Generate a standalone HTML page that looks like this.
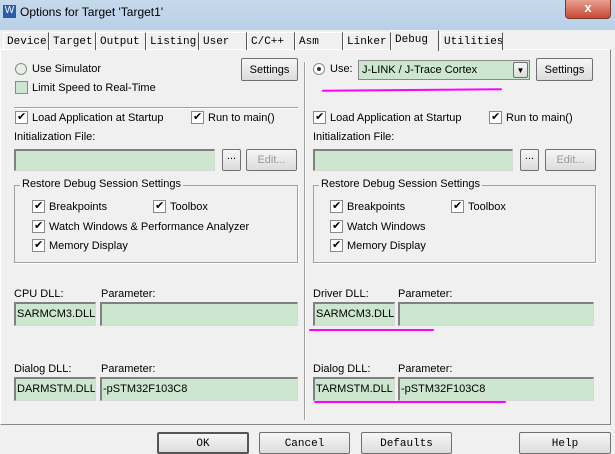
<!DOCTYPE html><html><head><style>
*{box-sizing:border-box}
body{margin:0;width:615px;height:448px;overflow:hidden;background:#f0f0f0;font:11px "Liberation Sans",sans-serif;color:#000;position:relative}
.a{position:absolute;white-space:nowrap}
.tb{left:0;top:0;width:615px;height:30px;background:linear-gradient(#c6d9ec,#b8d0e8);}
.tab{position:absolute;top:32px;height:18px;font:11px "Liberation Mono",monospace;padding:3px 3px;border-left:1px solid #fff;border-right:1px solid #555;border-top:1px solid #fff;white-space:nowrap;overflow:hidden}
.panel{left:0;top:49px;width:611px;height:376px;border:1px solid #888;border-top:1px solid #fff;border-left:1px solid #fff}
.btn{position:absolute;border:1px solid #707070;border-radius:2px;text-align:center;background:linear-gradient(#f6f6f6,#dcdcdc)}
.in{position:absolute;background:#cde6d0;border:1px solid #d8d8d8;border-top:2px solid #808080;border-left:2px solid #808080;padding:4px 1px;overflow:hidden;white-space:nowrap}
.cb{position:absolute;width:13px;height:13px;border:1px solid #8a8a8a;background:#fff}
.cb:after{content:"✔";position:absolute;left:1px;top:-2px;font-size:11px}
.cb.n:after{content:""}
.rd{position:absolute;width:12px;height:12px;border:1px solid #8a8a8a;border-radius:50%;background:#fff}
.hl{position:absolute;height:2px;border-top:1px solid #a0a0a0;border-bottom:1px solid #fff}
.grp{position:absolute;border:1px solid #a0a0a0;box-shadow:1px 1px 0 #fff}
.mag{position:absolute;height:2px;background:#f0f;border-radius:1px}
</style></head><body>
<div class="a tb"></div>
<div class="a" style="left:3px;top:5px;width:13px;height:13px;background:#2a5caa;color:#fff;font-size:10px;text-align:center">W</div>
<div class="a" style="left:20px;top:5px;font-size:12px">Options for Target 'Target1'</div>
<div class="a" style="left:565px;top:0;width:46px;height:19px;background:linear-gradient(#e8a090,#c74a35);border:1px solid #7a3a30;border-top:none;border-radius:0 0 4px 4px;color:#fff;text-align:center;font-weight:bold;font-size:13px">x</div>
<div class="a panel"></div>
<div class="tab" style="left:3px;width:46px">Device</div>
<div class="tab" style="left:49px;width:47px">Target</div>
<div class="tab" style="left:96px;width:50px">Output</div>
<div class="tab" style="left:146px;width:53px">Listing</div>
<div class="tab" style="left:199px;width:48px">User</div>
<div class="tab" style="left:247px;width:48px">C/C++</div>
<div class="tab" style="left:295px;width:48px">Asm</div>
<div class="tab" style="left:343px;width:48px">Linker</div>
<div class="tab" style="left:391px;width:48px;top:30px;height:21px;background:#f0f0f0;padding-top:3px">Debug</div>
<div class="tab" style="left:440px;width:63px">Utilities</div>

<div class="a" style="left:304px;top:62px;width:2px;height:358px;border-left:1px solid #a0a0a0;border-right:1px solid #fff"></div>

<!-- left -->
<div class="rd" style="left:15px;top:63px;background:#e6f0e6"></div><div class="a" style="left:32px;top:63px">Use Simulator</div>
<div class="btn" style="left:241px;top:58px;width:57px;height:23px;padding-top:5px">Settings</div>
<div class="cb n" style="left:15px;top:81px;background:#cde6d0"></div><div class="a" style="left:32px;top:82px">Limit Speed to Real-Time</div>
<div class="hl" style="left:14px;top:107px;width:284px"></div>
<div class="cb" style="left:15px;top:111px"></div><div class="a" style="left:32px;top:112px">Load Application at Startup</div>
<div class="cb" style="left:191px;top:111px"></div><div class="a" style="left:208px;top:112px">Run to main()</div>
<div class="a" style="left:14px;top:131px">Initialization File:</div>
<div class="in" style="left:14px;top:149px;width:201px;height:22px"></div>
<div class="btn" style="left:222px;top:149px;width:19px;height:22px">...</div>
<div class="btn" style="left:246px;top:149px;width:51px;height:22px;color:#999;padding-top:4px">Edit...</div>
<div class="grp" style="left:14px;top:185px;width:284px;height:78px"></div>
<div class="a" style="left:20px;top:178px;background:#f0f0f0;padding:0 2px">Restore Debug Session Settings</div>
<div class="cb" style="left:32px;top:200px"></div><div class="a" style="left:49px;top:201px">Breakpoints</div>
<div class="cb" style="left:153px;top:200px"></div><div class="a" style="left:170px;top:201px">Toolbox</div>
<div class="cb" style="left:32px;top:220px"></div><div class="a" style="left:49px;top:221px">Watch Windows &amp; Performance Analyzer</div>
<div class="cb" style="left:32px;top:239px"></div><div class="a" style="left:49px;top:240px">Memory Display</div>
<div class="a" style="left:14px;top:288px">CPU DLL:</div><div class="a" style="left:101px;top:288px">Parameter:</div>
<div class="in" style="left:14px;top:302px;width:82px;height:24px">SARMCM3.DLL</div>
<div class="in" style="left:100px;top:302px;width:198px;height:24px"></div>
<div class="a" style="left:14px;top:363px">Dialog DLL:</div><div class="a" style="left:101px;top:363px">Parameter:</div>
<div class="in" style="left:14px;top:377px;width:82px;height:24px">DARMSTM.DLL</div>
<div class="in" style="left:100px;top:377px;width:198px;height:24px">-pSTM32F103C8</div>

<!-- right -->
<div class="rd" style="left:313px;top:63px"></div><div class="a" style="left:317px;top:67px;width:4px;height:4px;background:#333;border-radius:50%"></div>
<div class="a" style="left:330px;top:63px">Use:</div>
<div class="in" style="left:358px;top:60px;width:172px;height:20px;border:1px solid #888;padding:3px 3px">J-LINK / J-Trace Cortex</div>
<div class="btn" style="left:513px;top:62px;width:15px;height:16px;font-size:8px;padding-top:3px">▼</div>
<div class="btn" style="left:536px;top:58px;width:57px;height:23px;padding-top:5px">Settings</div>
<div class="mag" style="left:322px;top:89px;width:180px;transform:rotate(-0.5deg)"></div>
<div class="cb" style="left:313px;top:111px"></div><div class="a" style="left:330px;top:112px">Load Application at Startup</div>
<div class="cb" style="left:489px;top:111px"></div><div class="a" style="left:506px;top:112px">Run to main()</div>
<div class="a" style="left:313px;top:131px">Initialization File:</div>
<div class="in" style="left:313px;top:149px;width:200px;height:22px"></div>
<div class="btn" style="left:520px;top:149px;width:19px;height:22px">...</div>
<div class="btn" style="left:545px;top:149px;width:51px;height:22px;color:#999;padding-top:4px">Edit...</div>
<div class="grp" style="left:313px;top:185px;width:283px;height:78px"></div>
<div class="a" style="left:319px;top:178px;background:#f0f0f0;padding:0 2px">Restore Debug Session Settings</div>
<div class="cb" style="left:330px;top:200px"></div><div class="a" style="left:347px;top:201px">Breakpoints</div>
<div class="cb" style="left:451px;top:200px"></div><div class="a" style="left:468px;top:201px">Toolbox</div>
<div class="cb" style="left:330px;top:220px"></div><div class="a" style="left:347px;top:221px">Watch Windows</div>
<div class="cb" style="left:330px;top:239px"></div><div class="a" style="left:347px;top:240px">Memory Display</div>
<div class="a" style="left:313px;top:288px">Driver DLL:</div><div class="a" style="left:398px;top:288px">Parameter:</div>
<div class="in" style="left:313px;top:302px;width:82px;height:24px">SARMCM3.DLL</div>
<div class="in" style="left:398px;top:302px;width:196px;height:24px"></div>
<div class="mag" style="left:309px;top:329px;width:125px"></div>
<div class="a" style="left:313px;top:363px">Dialog DLL:</div><div class="a" style="left:398px;top:363px">Parameter:</div>
<div class="in" style="left:313px;top:377px;width:82px;height:24px">TARMSTM.DLL</div>
<div class="in" style="left:398px;top:377px;width:196px;height:24px">-pSTM32F103C8</div>
<div class="mag" style="left:314px;top:401px;width:192px"></div>

<div class="btn" style="left:157px;top:432px;width:92px;height:22px;border:2px solid #555;font:11px 'Liberation Mono',monospace;padding-top:4px">OK</div>
<div class="btn" style="left:259px;top:432px;width:91px;height:22px;font:11px 'Liberation Mono',monospace;padding-top:5px">Cancel</div>
<div class="btn" style="left:361px;top:432px;width:91px;height:22px;font:11px 'Liberation Mono',monospace;padding-top:5px">Defaults</div>
<div class="btn" style="left:519px;top:432px;width:92px;height:22px;font:11px 'Liberation Mono',monospace;padding-top:5px">Help</div>
</body></html>
